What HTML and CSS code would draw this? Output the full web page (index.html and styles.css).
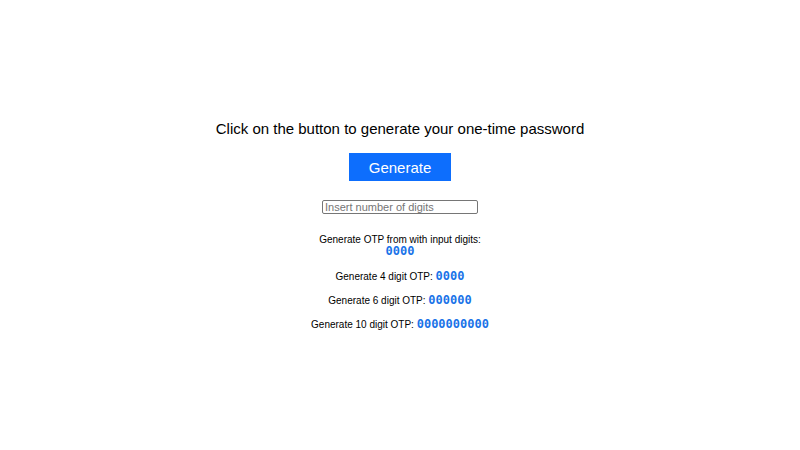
FILE: index.html
```html
<!DOCTYPE html>
<html>
<head>
<meta charset="utf-8">
<link rel="stylesheet" href="styles.css">
</head>
<body>
<main class="page">
  <h1 class="title">Click on the button to generate your one-time password</h1>
  <button class="btn">Generate</button>
  <input class="digits" type="text" placeholder="Insert number of digits">
  <div class="results">
    <p class="row row-stacked">Generate OTP from with input digits:<br><span class="otp">0000</span></p>
    <p class="row">Generate 4 digit OTP: <span class="otp">0000</span></p>
    <p class="row">Generate 6 digit OTP: <span class="otp">000000</span></p>
    <p class="row">Generate 10 digit OTP: <span class="otp">0000000000</span></p>
  </div>
</main>
</body>
</html>
```
FILE: styles.css
```css
html, body {
  margin: 0;
  height: 100%;
  background: #fff;
}
.page {
  box-sizing: border-box;
  height: 100%;
  padding-top: 120px;
  display: flex;
  flex-direction: column;
  align-items: center;
  font-family: "Liberation Sans", Arial, sans-serif;
  color: #000;
}
.title {
  margin: 0 0 16px;
  font-size: 15px;
  line-height: 17px;
  font-weight: normal;
}
.btn {
  width: 102px;
  height: 28px;
  padding: 0;
  background: #0d6efd;
  color: #fff;
  border: none;
  font-family: "Liberation Sans", Arial, sans-serif;
  font-size: 15px;
  margin-bottom: 19px;
}
.digits {
  width: 156px;
  height: 14px;
  box-sizing: border-box;
  font-family: "Liberation Sans", Arial, sans-serif;
  font-size: 11px;
  border: 1px solid #767676;
  border-radius: 2px;
  padding: 0 2px;
  margin: 0 0 20px;
}
.results {
  display: flex;
  flex-direction: column;
  align-items: center;
  gap: 12px;
}
.row {
  margin: 0;
  font-size: 10px;
  line-height: 12px;
  text-align: center;
}
.row-stacked {
  padding-bottom: 1px;
}
.otp {
  font-family: "DejaVu Sans Mono", monospace;
  font-weight: bold;
  color: #1a73e8;
  font-size: 12px;
  line-height: 0;
}
```
